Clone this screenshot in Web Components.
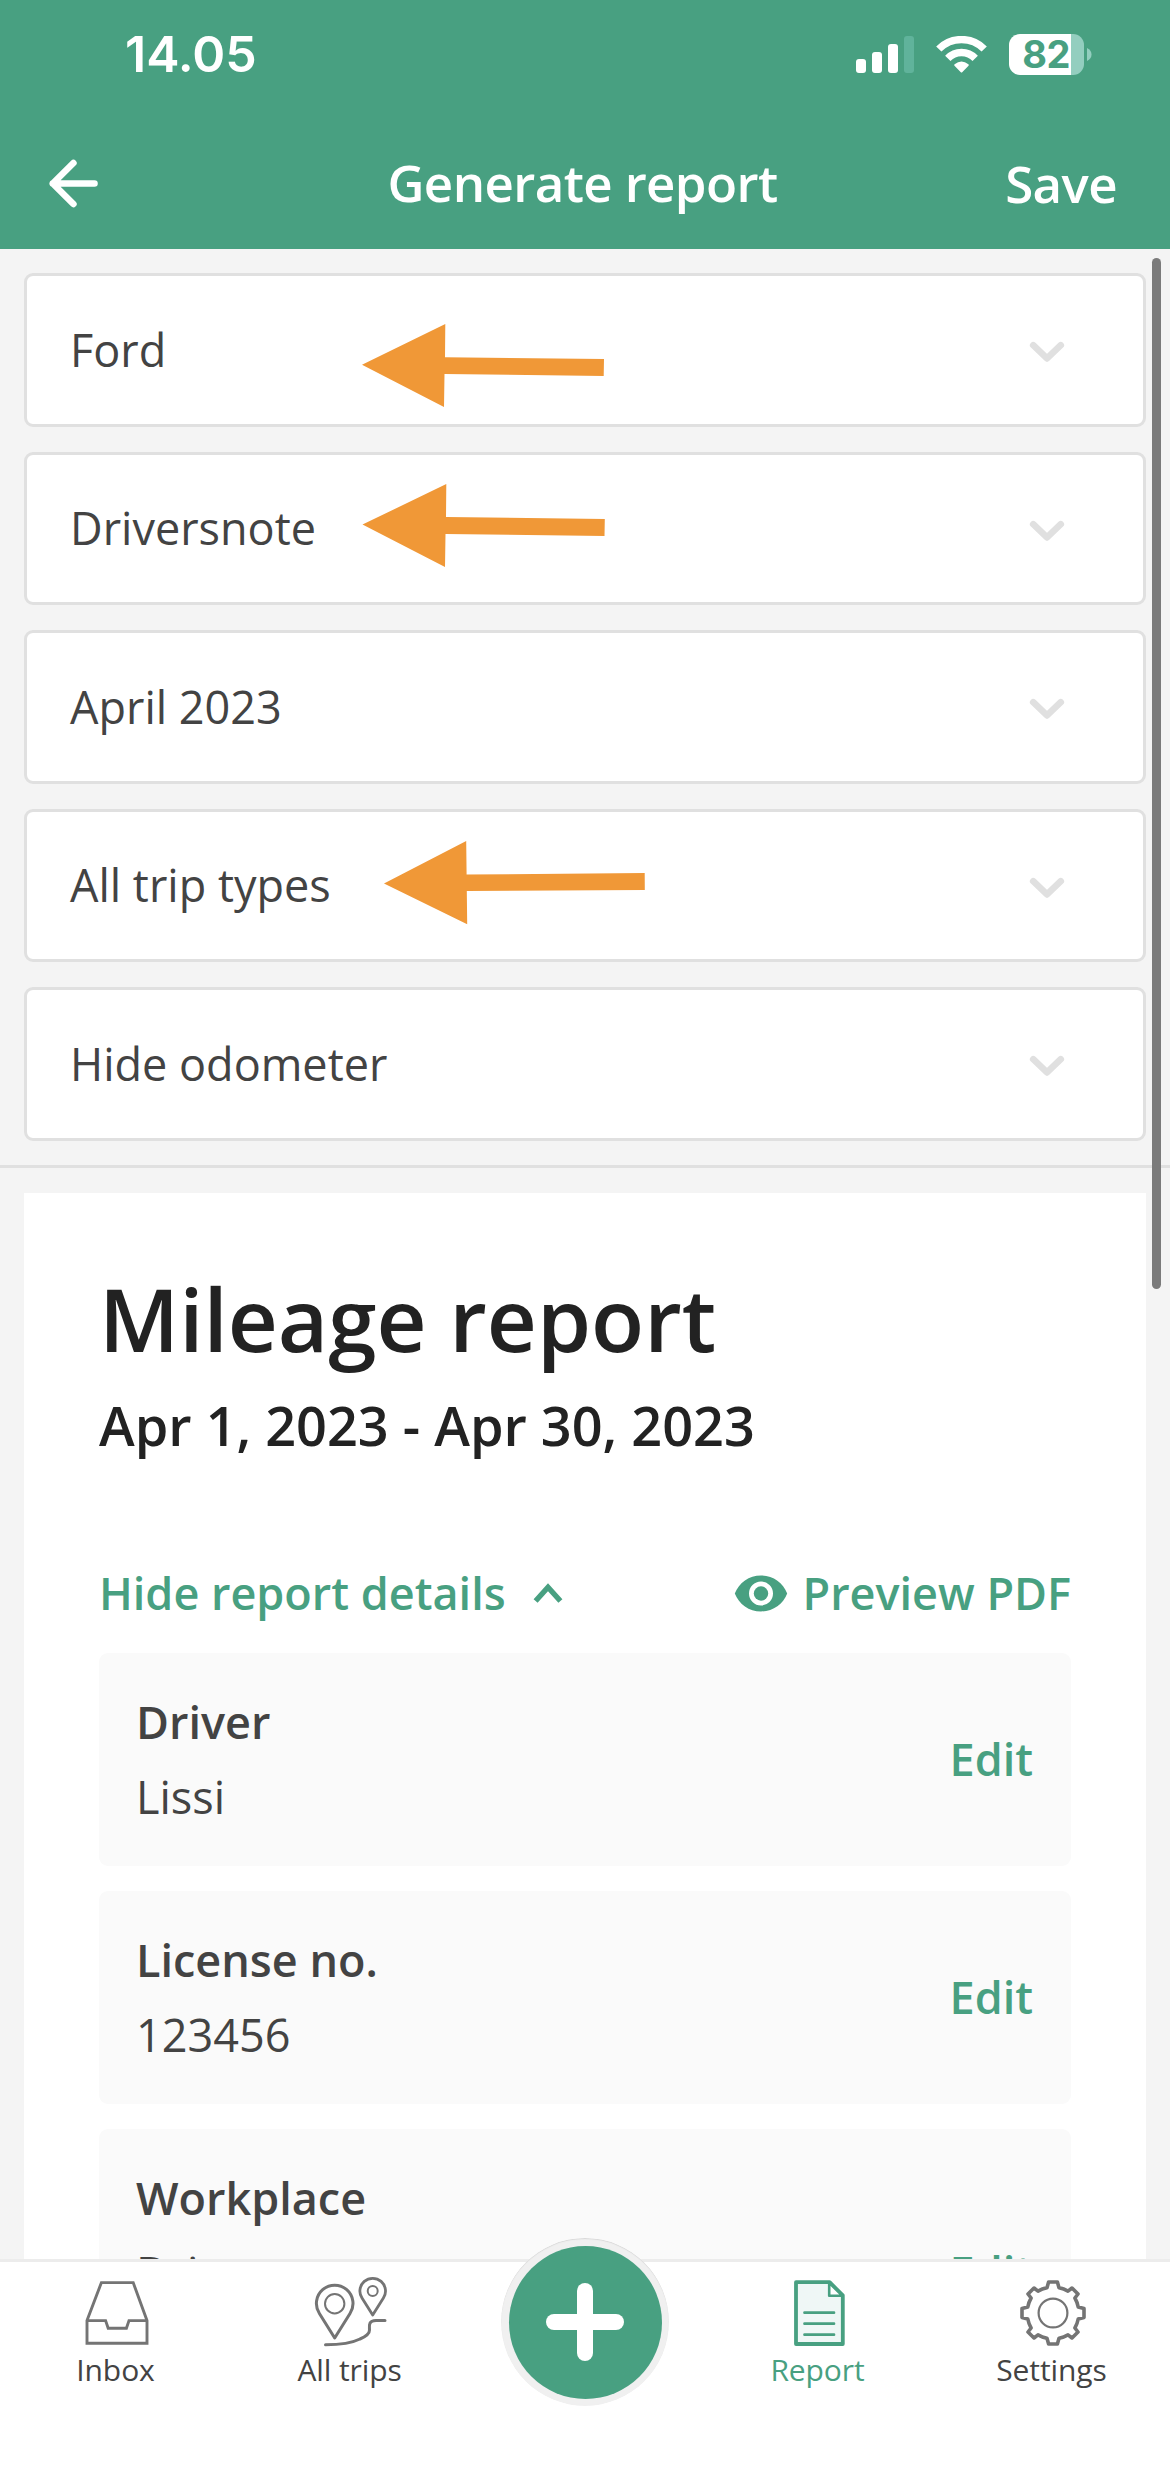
<!DOCTYPE html>
<html lang="en">
<head>
<meta charset="utf-8">
<title>Generate report</title>
<style>
  :root {
    --green: #48a081;
    --text: #434343;
    --heading: #222222;
    --line: #e0e0e0;
    --page-bg: #f4f4f4;
  }
  body {
    margin: 0;
    font-family: "Open Sans", "Noto Sans", sans-serif;
    color: var(--text);
  }
</style>
</head>
<body>
<app-screen>
  <status-bar slot="top" time="14.05" battery="82"></status-bar>
  <nav-header slot="top" action="Save">Generate report</nav-header>

  <filter-list>
    <filter-select>Ford</filter-select>
    <filter-select>Driversnote</filter-select>
    <filter-select>April 2023</filter-select>
    <filter-select>All trip types</filter-select>
    <filter-select>Hide odometer</filter-select>
  </filter-list>

  <report-card heading="Mileage report" period="Apr 1, 2023 - Apr 30, 2023">
    <detail-row label="Driver">Lissi</detail-row>
    <detail-row label="License no.">123456</detail-row>
    <detail-row label="Workplace" multiline>Driversnote</detail-row>
  </report-card>

  <pointer-arrows slot="overlay"></pointer-arrows>

  <tab-bar slot="bottom">
    <tab-item icon="inbox">Inbox</tab-item>
    <tab-item icon="trips">All trips</tab-item>
    <add-button></add-button>
    <tab-item icon="report" active>Report</tab-item>
    <tab-item icon="settings">Settings</tab-item>
  </tab-bar>
</app-screen>

<script>
  class AppScreen extends HTMLElement {
    constructor() {
      super();
      this.attachShadow({ mode: 'open' });
    }

    connectedCallback() {
      this.shadowRoot.innerHTML = `
        <style>
          :host {
            display: flex;
            flex-direction: column;
            position: relative;
            width: 1170px;
            height: 2465px;
            overflow: hidden;
            background: var(--page-bg);
          }
          main {
            flex: 1;
            min-height: 0;
            overflow: hidden;
          }
          .scrollbar {
            position: absolute;
            top: 258px;
            right: 9px;
            width: 9px;
            height: 1031px;
            border-radius: 5px;
            background: #7b7b7b;
          }
        </style>
        <slot name="top"></slot>
        <main><slot></slot></main>
        <slot name="bottom"></slot>
        <slot name="overlay"></slot>
        <div class="scrollbar"></div>
      `;
    }
  }

  class StatusBar extends HTMLElement {
    constructor() {
      super();
      this.attachShadow({ mode: 'open' });
    }

    connectedCallback() {
      const time = this.getAttribute('time') || '';
      const battery = this.getAttribute('battery') || '';

      this.shadowRoot.innerHTML = `
        <style>
          :host {
            display: flex;
            justify-content: space-between;
            align-items: center;
            box-sizing: border-box;
            height: 117px;
            padding: 0 78px 9px 125px;
            background: var(--green);
            color: #fff;
            font-family: Inter, sans-serif;
          }
          .time {
            font-size: 50px;
            font-weight: 600;
            line-height: 60px;
            letter-spacing: 0;
          }
          .icons {
            display: flex;
            align-items: center;
          }
          svg {
            display: block;
          }
          .signal { margin-right: 22px; }
          .wifi { margin-right: 22px; }
          .battery {
            display: flex;
            align-items: center;
            justify-content: center;
            box-sizing: border-box;
            width: 75px;
            height: 41px;
            padding-right: 1px;
            border-radius: 11px;
            background: linear-gradient(to right, #fff 62px, #93cebf 62px);
            color: var(--green);
            font-size: 38px;
            font-weight: 700;
            letter-spacing: -0.5px;
            line-height: 41px;
          }
          .nub { margin: 0 0 0 3px; }
        </style>
        <div class="time">${time}</div>
        <div class="icons">
          <svg class="signal" width="58" height="37" viewBox="0 0 58 37" fill="#fff">
            <rect x="0" y="23" width="10" height="14" rx="3"/>
            <rect x="16" y="16" width="10" height="21" rx="3"/>
            <rect x="32" y="8" width="10" height="29" rx="3"/>
            <rect x="48" y="0" width="10" height="37" rx="3" fill="#60b39b"/>
          </svg>
          <svg class="wifi" width="51" height="37" viewBox="0 0 51 37">
            <g fill="none" stroke="#fff" stroke-width="7.4">
              <path d="M2.8 13 A32 32 0 0 1 48.2 13"/>
              <path d="M11.8 22.4 A19 19 0 0 1 39.2 22.4"/>
            </g>
            <path d="M18.6 28.2 Q25.5 22.6 32.4 28.2 Q33.3 29 32.5 29.8 L26.2 36.2 Q25.5 36.9 24.8 36.2 L18.5 29.8 Q17.7 29 18.6 28.2Z" fill="#fff"/>
          </svg>
          <div class="battery">${battery}</div>
          <svg class="nub" width="5" height="13" viewBox="0 0 5 13">
            <path d="M0 0 Q4.5 2.2 4.5 6.5 Q4.5 10.8 0 13Z" fill="#93cebf"/>
          </svg>
        </div>
      `;
    }
  }

  class NavHeader extends HTMLElement {
    constructor() {
      super();
      this.attachShadow({ mode: 'open' });
    }

    connectedCallback() {
      const action = this.getAttribute('action') || '';

      this.shadowRoot.innerHTML = `
        <style>
          :host {
            display: grid;
            grid-template-columns: 1fr auto 1fr;
            align-items: center;
            box-sizing: border-box;
            height: 132px;
            padding: 0 53px 0 48px;
            background: var(--green);
            color: #fff;
            font-size: 51px;
            font-weight: 600;
            letter-spacing: -0.6px;
            line-height: 70px;
          }
          svg {
            display: block;
          }
          .title {
            padding-bottom: 3px;
          }
          .action {
            justify-self: end;
          }
        </style>
        <svg width="52" height="50" viewBox="0 0 52 50" fill="none" stroke="#fff" stroke-width="6.6" stroke-linecap="round" stroke-linejoin="round">
          <path d="M25.4 5 L4.8 25.5 L25.4 46 M4.8 25.5 H46.5"/>
        </svg>
        <div class="title"><slot></slot></div>
        <div class="action">${action}</div>
      `;
    }
  }

  class FilterList extends HTMLElement {
    constructor() {
      super();
      this.attachShadow({ mode: 'open' });
    }

    connectedCallback() {
      this.shadowRoot.innerHTML = `
        <style>
          :host {
            display: flex;
            flex-direction: column;
            gap: 25px;
            padding: 24px 24px 24.5px;
            border-bottom: 3px solid var(--line);
          }
        </style>
        <slot></slot>
      `;
    }
  }

  class FilterSelect extends HTMLElement {
    constructor() {
      super();
      this.attachShadow({ mode: 'open' });
    }

    connectedCallback() {
      this.shadowRoot.innerHTML = `
        <style>
          :host {
            display: flex;
            justify-content: space-between;
            align-items: center;
            box-sizing: border-box;
            height: 153.5px;
            padding: 0 78px 0 43px;
            border: 3px solid var(--line);
            border-radius: 9px;
            background: #fff;
            font-size: 45px;
            line-height: 60px;
          }
          svg {
            display: block;
            margin-top: 5px;
          }
        </style>
        <div><slot></slot></div>
        <svg width="36" height="22" viewBox="0 0 36 22" fill="none" stroke="#e0e0e0" stroke-width="6.6" stroke-linecap="round" stroke-linejoin="round">
          <path d="M4.2 4.2 L18 17.4 L31.8 4.2"/>
        </svg>
      `;
    }
  }

  class ReportCard extends HTMLElement {
    constructor() {
      super();
      this.attachShadow({ mode: 'open' });
    }

    connectedCallback() {
      const heading = this.getAttribute('heading') || '';
      const period = this.getAttribute('period') || '';

      this.shadowRoot.innerHTML = `
        <style>
          :host {
            display: block;
            margin: 25px 24px 0;
            padding: 75px 75px 0;
            background: #fff;
          }
          h1, h2 {
            margin: 0;
            color: var(--heading);
            font-weight: 600;
          }
          h1 {
            font-size: 87px;
            line-height: 100px;
          }
          h2 {
            margin-top: 20px;
            font-size: 54px;
            line-height: 74px;
          }
          .actions {
            display: flex;
            justify-content: space-between;
            align-items: center;
            margin-top: 101px;
            color: var(--green);
            font-size: 45px;
            font-weight: 600;
            line-height: 60px;
          }
          .action {
            display: flex;
            align-items: center;
          }
          svg {
            display: block;
          }
          .toggle svg { margin-left: 27px; }
          .preview svg { margin: 1px 14px 0 0; }
          .details {
            display: flex;
            flex-direction: column;
            gap: 25.5px;
            margin-top: 30px;
          }
        </style>
        <h1>${heading}</h1>
        <h2>${period}</h2>
        <div class="actions">
          <div class="action toggle">
            Hide report details
            <svg width="30" height="20" viewBox="0 0 30 20" fill="none" stroke="#48a081" stroke-width="5.4">
              <path d="M2.6 18 L15 4.2 L27.4 18"/>
            </svg>
          </div>
          <div class="action preview">
            <svg width="54" height="37" viewBox="0 0 54 37">
              <path fill="#48a081" fill-rule="evenodd" d="M27 0.5 C15 0.5 5 7.8 0.8 18.5 C5 29.2 15 36.5 27 36.5 C39 36.5 49 29.2 53.2 18.5 C49 7.8 39 0.5 27 0.5Z M27 30.5 A12 12 0 1 1 27 6.5 A12 12 0 0 1 27 30.5Z"/>
              <circle cx="27" cy="18.5" r="7.2" fill="#48a081"/>
            </svg>
            Preview PDF
          </div>
        </div>
        <div class="details"><slot></slot></div>
      `;
    }
  }

  class DetailRow extends HTMLElement {
    constructor() {
      super();
      this.attachShadow({ mode: 'open' });
    }

    connectedCallback() {
      const label = this.getAttribute('label') || '';

      this.shadowRoot.innerHTML = `
        <style>
          :host {
            display: flex;
            justify-content: space-between;
            align-items: center;
            box-sizing: border-box;
            min-height: 212.5px;
            padding: 31px 38px 31px 37px;
            border-radius: 9px;
            background: #fafafa;
            font-size: 45px;
            line-height: 75px;
          }
          /* value field with room for two lines */
          :host([multiline]) .value {
            min-height: 150px;
          }
          .label, .edit {
            font-weight: 600;
          }
          .edit {
            padding-bottom: 2px;
            color: var(--green);
          }
        </style>
        <div>
          <div class="label">${label}</div>
          <div class="value"><slot></slot></div>
        </div>
        <div class="edit">Edit</div>
      `;
    }
  }

  class TabBar extends HTMLElement {
    constructor() {
      super();
      this.attachShadow({ mode: 'open' });
    }

    connectedCallback() {
      this.shadowRoot.innerHTML = `
        <style>
          :host {
            display: grid;
            grid-template-columns: repeat(5, 1fr);
            align-items: start;
            position: relative;
            box-sizing: border-box;
            height: 206px;
            border-top: 3px solid #ececec;
            background: #fff;
          }
        </style>
        <slot></slot>
      `;
    }
  }

  // Tab icons share a 76x76 box, stroked with the current colour
  const TAB_ICONS = {
    inbox: `
      <g stroke-width="2.9" stroke-linejoin="miter">
        <path d="M8 46.6 L22.4 8.6 H54.2 L68 46.6 V69.2 H8Z"/>
        <path d="M8 46.6 H26.6 L29.2 54.2 H47.4 L50 46.6 H68"/>
      </g>`,
    trips: `
      <path stroke-width="3" d="M21.7 64 L6.4 39.5 A18.3 18.3 0 1 1 37 39.5Z"/>
      <circle cx="21.7" cy="29.7" r="9.7" stroke-width="2"/>
      <path stroke-width="2.8" d="M59.7 41 L49 24.1 A12.8 12.8 0 1 1 70.4 24.1Z"/>
      <circle cx="59.7" cy="17.1" r="5" stroke-width="2"/>
      <path stroke-width="3" stroke-linecap="round" d="M12.5 70.8 C30 70.8 40 68.5 47 65 C54 62 56.6 59.5 56.5 56 C56.2 51 55.5 47 63 46.6 H72"/>`,
    report: `
      <path fill="#eff7f6" stroke-width="3.8" d="M15 8.2 H48.6 L61.8 21.4 V70 H15Z"/>
      <path fill="#fff" stroke-width="2.6" d="M48.2 8.8 V21.8 H61.4Z"/>
      <path stroke-width="2.7" stroke-linecap="round" d="M23.5 38.7 H53 M23.5 49.7 H53 M23.5 60.7 H53"/>`,
    settings: `
      <g transform="translate(38 39)">
        <path stroke-width="3.6" d="M-4.4 -31 H4.4 L6 -25.2 Q10.8 -24.3 15 -21.9 L19 -25 L25 -19 L21.9 -15 Q24.3 -10.8 25.2 -6 L31 -4.4 V4.4 L25.2 6 Q24.3 10.8 21.9 15 L25 19 L19 25 L15 21.9 Q10.8 24.3 6 25.2 L4.4 31 H-4.4 L-6 25.2 Q-10.8 24.3 -15 21.9 L-19 25 L-25 19 L-21.9 15 Q-24.3 10.8 -25.2 6 L-31 4.4 V-4.4 L-25.2 -6 Q-24.3 -10.8 -21.9 -15 L-25 -19 L-19 -25 L-15 -21.9 Q-10.8 -24.3 -6 -25.2Z"/>
        <circle r="14.4" stroke-width="2.2"/>
      </g>`
  };

  class TabItem extends HTMLElement {
    constructor() {
      super();
      this.attachShadow({ mode: 'open' });
    }

    connectedCallback() {
      const icon = TAB_ICONS[this.getAttribute('icon')] || '';

      this.shadowRoot.innerHTML = `
        <style>
          :host {
            display: flex;
            flex-direction: column;
            align-items: center;
            padding-top: 12px;
            font-size: 30px;
            letter-spacing: -0.1px;
            line-height: 40px;
          }
          svg {
            display: block;
            overflow: visible;
            color: #747474;
          }
          .label {
            padding-right: 3px;
          }
          :host([active]), :host([active]) svg {
            color: var(--green);
          }
        </style>
        <svg width="76" height="76" viewBox="0 0 76 76" fill="none" stroke="currentColor" stroke-linejoin="round">${icon}</svg>
        <div class="label"><slot></slot></div>
      `;
    }
  }

  class AddButton extends HTMLElement {
    constructor() {
      super();
      this.attachShadow({ mode: 'open' });
    }

    connectedCallback() {
      this.shadowRoot.innerHTML = `
        <style>
          :host {
            display: flex;
            align-items: center;
            justify-content: center;
            justify-self: center;
            box-sizing: border-box;
            width: 168px;
            height: 168px;
            margin-top: -24px;
            border-radius: 50%;
            background: #f0f0f0;
            box-shadow: inset 0 1px 1px #d8d8d8;
            clip-path: circle(84px);
          }
          .disc {
            display: flex;
            align-items: center;
            justify-content: center;
            width: 153px;
            height: 153px;
            border-radius: 50%;
            background: var(--green);
          }
          svg {
            display: block;
          }
        </style>
        <div class="disc">
          <svg width="78" height="78" viewBox="0 0 78 78" fill="#fff">
            <rect x="31" y="0" width="16" height="78" rx="8"/>
            <rect x="0" y="31" width="78" height="16" rx="8"/>
          </svg>
        </div>
      `;
    }
  }

  // Orange arrows that lie over the filters
  class PointerArrows extends HTMLElement {
    constructor() {
      super();
      this.attachShadow({ mode: 'open' });
    }

    connectedCallback() {
      this.shadowRoot.innerHTML = `
        <style>
          :host {
            display: block;
            position: absolute;
            top: 0;
            left: 0;
            pointer-events: none;
          }
          svg {
            display: block;
          }
        </style>
        <svg width="1170" height="1000" viewBox="0 0 1170 1000" fill="#f09837">
          <path d="M362 364.7 L445.3 324 L445 357.2 L604 359 L603.7 376 L444.5 374 L444 407Z"/>
          <path d="M362.5 524.6 L446.3 484 L446 517 L604.8 519 L604.5 536 L445.5 534 L445 567Z"/>
          <path d="M384 883.5 L466.2 841 L466.6 874.5 L644.7 873 L644.8 890 L466.8 891 L467.2 924.3Z"/>
        </svg>
      `;
    }
  }

  customElements.define('app-screen', AppScreen);
  customElements.define('status-bar', StatusBar);
  customElements.define('nav-header', NavHeader);
  customElements.define('filter-list', FilterList);
  customElements.define('filter-select', FilterSelect);
  customElements.define('report-card', ReportCard);
  customElements.define('detail-row', DetailRow);
  customElements.define('tab-bar', TabBar);
  customElements.define('tab-item', TabItem);
  customElements.define('add-button', AddButton);
  customElements.define('pointer-arrows', PointerArrows);
</script>
</body>
</html>
